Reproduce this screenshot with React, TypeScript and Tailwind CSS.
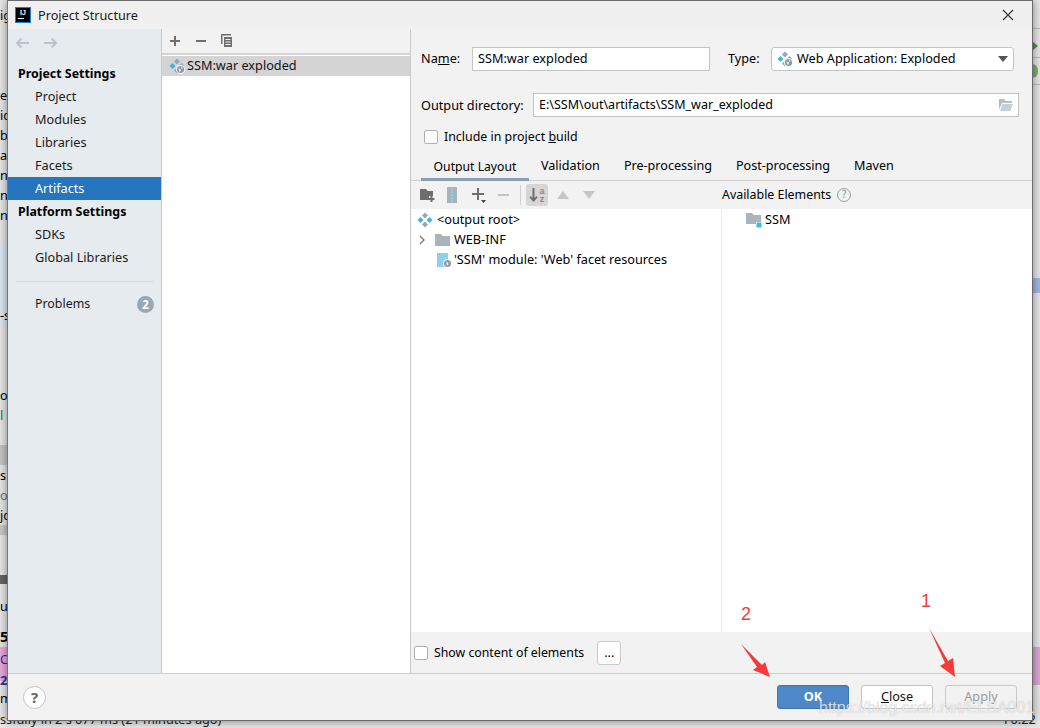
const UI_FONT = "font-['Noto_Sans','Open_Sans',sans-serif]";

const navTop = ['Project', 'Modules', 'Libraries', 'Facets', 'Artifacts'];
const navPlatform = ['SDKs', 'Global Libraries'];
const tabs = ['Validation', 'Pre-processing', 'Post-processing', 'Maven'];

// clipped text of the IDE window behind the dialog
const behindLeft: { y: number; t: string; cls?: string }[] = [
  { y: 6, t: 'ig' }, { y: 86, t: 'e' }, { y: 106, t: 'ic' }, { y: 126, t: 'b' }, { y: 146, t: 'at' },
  { y: 166, t: 'ng' }, { y: 186, t: 'ng' }, { y: 206, t: 'ng' }, { y: 306, t: '-s' }, { y: 386, t: 'oc' },
  { y: 406, t: 'l', cls: 'text-green-700' }, { y: 466, t: 's' }, { y: 486, t: 'og', cls: 'text-gray-500' }, { y: 506, t: 'jc' },
  { y: 597, t: 'ut' }, { y: 627, t: '5', cls: 'font-bold text-[15px]' }, { y: 650, t: 'C', cls: 'text-blue-900' },
  { y: 671, t: '2', cls: 'font-bold text-blue-900' }, { y: 689, t: 'm' },
];

function ArtifactIcon({ globe = true }: { globe?: boolean }) {
  return (
    <svg width="16" height="16" viewBox="0 0 16 16" className="shrink-0">
      <path d="M8 0.5l3 3-3 3-3-3z" fill="#9aa7b0" />
      <path d="M3.5 5l3 3-3 3-3-3z" fill="#40b6e0" />
      <path d="M12.5 5l3 3-3 3-3-3z" fill={globe ? '#9aa7b0' : '#40b6e0'} />
      <path d="M8 9.5l3 3-3 3-3-3z" fill="#9aa7b0" />
      {globe && (
        <g>
          <circle cx="11.5" cy="11.5" r="4.5" fill="#fff" />
          <circle cx="11.5" cy="11.5" r="3.6" fill="#8a9aa6" />
          <path d="M9.5 10.5l2 .5 .5 2-1.500 1zM12 8.500l2 1.500-1.500 1z" fill="#e6ebef" />
        </g>
      )}
    </svg>
  );
}

function FolderIcon() {
  return (
    <svg width="15" height="12" viewBox="0 0 15 12" className="shrink-0">
      <path d="M0 0h6l1.500 2H15v10H0z" fill="#aab4bb" />
    </svg>
  );
}

function ToolIcon({ d, fill = '#6e6e6e' }: { d: string; fill?: string }) {
  return (
    <svg width="16" height="16" viewBox="0 0 16 16" className="shrink-0">
      <path d={d} fill={fill} />
    </svg>
  );
}

function Checkbox() {
  return <span className="block w-[14px] h-[14px] rounded-[2px] border border-[#b0b0b0] bg-white shrink-0" />;
}

function Button({ label, cls }: { label: React.ReactNode; cls: string }) {
  return (
    <div className={`w-[72px] h-[24px] rounded-[3px] border flex items-center justify-center text-[12.7px] ${cls}`}>{label}</div>
  );
}

export default function App() {
  return (
    <div className={`relative w-[1040px] h-[728px] overflow-hidden bg-[#e6e6e6] text-[12.7px] text-black ${UI_FONT}`}>
      {/* IDE window behind the dialog */}
      <div className="absolute left-0 top-[245px] w-2 h-[80px] bg-[#dde7f1]" />
      <div className="absolute left-0 top-[445px] w-2 h-[20px] bg-[#c4c4c4]" />
      <div className="absolute left-0 top-[525px] w-2 h-[10px] bg-[#c8c8c8]" />
      <div className="absolute left-0 top-[575px] w-2 h-[9px] bg-[#666666]" />
      <div className="absolute left-0 top-[647px] w-2 h-[34px] bg-[#e8a8dc]" />
      <div className="absolute left-[1032px] top-[278px] w-2 h-[15px] bg-[#9fb8e8]" />
      <div className="absolute left-[1032px] top-[647px] w-2 h-[38px] bg-[#dba6d4]" />
      <div className="absolute left-[1032px] top-[64px] w-[6px] h-[14px] rounded-r-full bg-[#7fae6e]" />
      <div className="absolute left-[1032px] top-[41px] w-0 h-0 border-y-[5px] border-y-transparent border-l-[6px] border-l-[#4d8f4d]" />
      <div className="absolute left-[1032px] top-[28px] w-2 h-px bg-[#bdbdbd]" />
      <div className="absolute left-[1032px] top-[57px] w-2 h-px bg-[#bdbdbd]" />
      <div className="absolute left-[1032px] top-[84px] w-2 h-px bg-[#bdbdbd]" />
      {behindLeft.map(b => (
        <div key={b.y} className={`absolute left-0 w-[7px] overflow-hidden whitespace-nowrap leading-[18px] ${b.cls ?? ''}`} style={{ top: b.y }}>{b.t}</div>
      ))}
      <div className="absolute left-0 top-[710px] whitespace-nowrap leading-[18px] text-[#222]">ssfully in 2 s 077 ms (21 minutes ago)</div>
      <div className="absolute left-[1004px] top-[710px] whitespace-nowrap leading-[18px] text-[#222]">F0:22</div>

      {/* dialog window */}
      <div className="absolute left-[7px] top-0 w-[1026px] h-[721px] flex flex-col border border-[#6b6b6b] border-l-[#777] bg-[#f2f2f2] shadow-[0_0_9px_rgba(0,0,0,0.45)]">
        {/* title bar */}
        <div className="h-[28px] shrink-0 bg-[#f0f0f0] flex items-center pl-[7px] pr-[18px]">
          <div className="w-4 h-4 bg-black border border-[#1b7fd6] flex flex-col items-center justify-start mr-[7px] shrink-0">
            <span className="text-white text-[7px] leading-[9px] font-bold font-['Liberation_Sans',sans-serif]">IJ</span>
            <span className="block w-[6px] h-px bg-white self-start ml-[2px] mt-[1px]" />
          </div>
          <span className="pt-px text-[#1a1a1a]">Project Structure</span>
          <svg width="12" height="12" viewBox="0 0 12 12" className="ml-auto">
            <path d="M1 1l10 10M11 1L1 11" stroke="#333" strokeWidth="1.200" fill="none" />
          </svg>
        </div>

        <div className="flex-1 min-h-0 flex">
          {/* settings sidebar */}
          <div className="w-[153px] shrink-0 bg-[#e6ebf0] flex flex-col">
            <div className="h-[33px] shrink-0 flex items-start pt-[8px] pl-[7px] gap-[13px]">
              <svg width="15" height="12" viewBox="0 0 15 12"><path d="M14 6H2M6.500 1.500L2 6l4.500 4.500" stroke="#bcc2c7" strokeWidth="2" fill="none" /></svg>
              <svg width="15" height="12" viewBox="0 0 15 12"><path d="M1 6h12M8.500 1.500L13 6l-4.500 4.500" stroke="#bcc2c7" strokeWidth="2" fill="none" /></svg>
            </div>
            <div className="h-[23px] flex items-center pl-[10px] pt-[2px] font-bold text-[12.4px]">Project Settings</div>
            {navTop.map(n => (
              <div key={n} className={`h-[23px] flex items-center pl-[27px] ${n === 'Artifacts' ? 'bg-[#2675bf] text-white' : 'text-[#1a1a1a]'}`}>{n}</div>
            ))}
            <div className="h-[23px] flex items-center pl-[10px] pt-[2px] font-bold text-[12.4px]">Platform Settings</div>
            {navPlatform.map(n => (
              <div key={n} className="h-[23px] flex items-center pl-[27px] text-[#1a1a1a]">{n}</div>
            ))}
            <div className="h-px bg-[#d5d9dd] mt-[12px] mx-[8px]" />
            <div className="h-[23px] mt-[11px] flex items-center pl-[27px] pr-[7px] justify-between text-[#1a1a1a]">
              <span className="text-[12.4px]">Problems</span>
              <span className="w-[17px] h-[17px] rounded-full bg-[#9aa7b0] text-white text-[12px] font-bold flex items-center justify-center">2</span>
            </div>
          </div>

          {/* artifact list */}
          <div className="w-[250px] shrink-0 flex flex-col bg-white border-x border-[#c9c9c9]">
            <div className="h-[24px] shrink-0 bg-[#f2f2f2] flex items-center pl-[5px] gap-[10px]">
              <ToolIcon d="M7 3h2v4h4v2H9v4H7V9H3V7h4z" />
              <ToolIcon d="M3 7h10v2H3z" />
              <ToolIcon d="M2 1h10v1.500H3.500V11H2zM5 4h8v10H5zM6.500 6v1h5V6zm0 2.500v1h5v-1zm0 2.500v1h5v-1z" />
            </div>
            <div className="h-[2px] shrink-0 bg-[#d4d4d4]" />
            <div className="h-px shrink-0 bg-white" />
            <div className="h-[20px] bg-[#d4d4d4] flex items-center pl-[7px] gap-[2px] text-[#111]">
              <ArtifactIcon />
              <span className="pb-px">SSM:war exploded</span>
            </div>
          </div>

          {/* artifact settings */}
          <div className="flex-1 min-w-0 flex flex-col">
            <div className="h-[18px] shrink-0" />
            <div className="h-[24px] shrink-0 flex items-center pl-[10px]">
              <span className="w-[51px]">Na<span className="underline">m</span>e:</span>
              <div className="w-[238px] h-[24px] border border-[#c4c4c4] bg-white flex items-center pl-[5px]">SSM:war exploded</div>
              <span className="ml-[18px] w-[43px]">Type:</span>
              <div className="w-[243px] h-[24px] border border-[#c4c4c4] rounded-[3px] bg-white flex items-center pl-[5px] gap-[4px]">
                <ArtifactIcon />
                <span>Web Application: Exploded</span>
                <span className="ml-auto mr-[5px] w-0 h-0 border-x-[5px] border-x-transparent border-t-[6px] border-t-[#555]" />
              </div>
            </div>
            <div className="h-[22px] shrink-0" />
            <div className="h-[24px] shrink-0 flex items-center pl-[10px]">
              <span className="w-[112px] pt-px whitespace-nowrap">Output directory:</span>
              <div className="w-[486px] h-[24px] border border-[#c4c4c4] bg-white flex items-center pl-[5px]">
                <span className="pt-px text-[12.5px]">E:\SSM\out\artifacts\SSM_war_exploded</span>
                <svg width="14" height="12" viewBox="0 0 14 12" className="ml-auto mr-[5px]">
                  <path d="M0 0h5l1.500 2H13v2H3L0 11z" fill="#b6bec4" />
                  <path d="M3.500 5H14l-2.500 7H1z" fill="#c9d0d5" />
                </svg>
              </div>
            </div>
            <div className="h-[12px] shrink-0" />
            <div className="h-[15px] shrink-0 flex items-center pl-[13px] gap-[6px]">
              <Checkbox />
              <span className="pt-px text-[12.4px]">Include in project <span className="underline">b</span>uild</span>
            </div>

            {/* tabs */}
            <div className="h-[37px] shrink-0 flex items-end pl-[10px] border-b border-[#cfcfcf]">
              <div className="h-[26px] w-[108px] flex items-start justify-center pt-[3px] border-b-[3px] border-[#8b9db0] -mb-px text-[12.2px]">Output Layout</div>
              {tabs.map(t => (
                <div key={t} className="h-[26px] px-3 flex items-start pt-[3px] whitespace-nowrap text-[12.6px]">{t}</div>
              ))}
            </div>

            {/* layout toolbars */}
            <div className="h-[28px] shrink-0 flex items-center">
              <div className="w-[310px] shrink-0 flex items-center pl-[9px]">
                <svg width="15" height="14" viewBox="0 0 15 14" className="mr-[12px] shrink-0">
                  <path d="M0 1h6l1.500 2H13v5H9v4H0z" fill="#6e6e6e" />
                  <path d="M10.500 8h2v2h2v2h-2v2h-2v-2h-2v-2h2z" fill="#6e6e6e" />
                </svg>
                <svg width="10" height="16" viewBox="0 0 10 16" className="mr-[15px] shrink-0">
                  <rect width="10" height="16" fill="#a8b4bb" />
                  <path d="M4 1h2v2H4zM4 4h2v2H4zM4 7h2v2H4zM4 10h2v2H4zM4 13h2v2H4z" fill="#8fd0ec" />
                </svg>
                <svg width="14" height="18" viewBox="0 0 14 18" className="mr-[12px] shrink-0">
                  <path d="M5 2h2v5h5v2H7v5H5V9H0V7h5z" fill="#6e6e6e" />
                  <path d="M9 14h5l-2.500 3z" fill="#444" />
                </svg>
                <svg width="11" height="12" viewBox="0 0 11 12" className="mr-[11px] shrink-0"><path d="M0 5h11v2H0z" fill="#c4c4c4" /></svg>
                <div className="w-px h-[20px] bg-[#d0d0d0] mr-[5px] shrink-0" />
                <div className="w-[22px] h-[22px] rounded-[3px] bg-[#d6d6d6] flex items-center justify-center gap-px mr-[9px] shrink-0">
                  <svg width="9" height="14" viewBox="0 0 9 14"><path d="M3.500 0h2v10l2-2 1 1.500-4 4.500-4-4.500 1-1.500 2 2z" fill="#6e6e6e" /></svg>
                  <span className="flex flex-col items-center text-[9px] leading-[8px] font-bold text-[#8a8a8a] font-['Liberation_Sans',sans-serif]">
                    <span>a</span>
                    <span>z</span>
                  </span>
                </div>
                <svg width="12" height="8" viewBox="0 0 12 8" className="mr-[14px] shrink-0"><path d="M6 0l6 8H0z" fill="#c6c6c6" /></svg>
                <svg width="12" height="8" viewBox="0 0 12 8" className="shrink-0"><path d="M0 0h12L6 8z" fill="#c6c6c6" /></svg>
              </div>
              <div className="flex items-center pl-px gap-[6px]">
                <span className="text-[12.4px]">Available Elements</span>
                <span className="w-[14px] h-[14px] rounded-full border border-[#9a9a9a] text-[#8a8a8a] text-[10px] flex items-center justify-center">?</span>
              </div>
            </div>

            {/* output tree and available elements */}
            <div className="flex-1 min-h-0 flex bg-white">
              <div className="w-[311px] shrink-0 border-r border-[#ececec] pt-px">
                <div className="h-[20px] flex items-center pl-[6px] gap-[4px]">
                  <ArtifactIcon globe={false} />
                  <span>&lt;output root&gt;</span>
                </div>
                <div className="h-[20px] flex items-center pl-[8px]">
                  <svg width="7" height="10" viewBox="0 0 7 10" className="mr-[9px]"><path d="M1 1l4 4-4 4" stroke="#777" strokeWidth="1.300" fill="none" /></svg>
                  <FolderIcon />
                  <span className="ml-[4px]">WEB-INF</span>
                </div>
                <div className="h-[20px] flex items-center pl-[26px] gap-[2px]">
                  <svg width="15" height="16" viewBox="0 0 15 16" className="shrink-0">
                    <path d="M0 1h11v14H0z" fill="#8fd0ec" />
                    <circle cx="10.500" cy="11.500" r="4.500" fill="#fff" />
                    <circle cx="10.500" cy="11.500" r="3.500" fill="#8a9aa6" />
                    <path d="M9 10l2 .5.500 2-1.500 1z" fill="#e6ebef" />
                  </svg>
                  <span>'SSM' module: 'Web' facet resources</span>
                </div>
              </div>
              <div className="flex-1 pt-px">
                <div className="h-[20px] flex items-center pl-[24px] gap-[3px]">
                  <svg width="16" height="15" viewBox="0 0 16 15" className="shrink-0">
                    <path d="M0 0h6l1.500 2H15v9H0z" fill="#aab4bb" />
                    <path d="M10 9h5v5h-5z" fill="#fff" />
                    <path d="M10.500 9.500h5v5h-5z" fill="#40b6e0" />
                  </svg>
                  <span>SSM</span>
                </div>
              </div>
            </div>

            <div className="h-[41px] shrink-0 flex items-center pl-[3px]">
              <Checkbox />
              <span className="ml-[6px] pt-px text-[12.3px]">Show content of elements</span>
              <div className="ml-[13px] w-[24px] h-[24px] rounded-[3px] border border-[#c9c9c9] bg-white flex items-center justify-center">...</div>
            </div>
          </div>
        </div>

        {/* button bar */}
        <div className="h-[47px] shrink-0 border-t border-[#cdcdcd] bg-[#f2f2f2] flex items-center pl-[15px] pr-[15px]">
          <div className="w-[23px] h-[23px] rounded-full border border-[#c4c4c4] bg-white text-[#666] text-[15px] font-bold flex items-center justify-center">?</div>
          <div className="ml-auto flex gap-[12px]">
            <Button label="OK" cls="bg-[#4f88c9] border-[#3d74b3] text-white font-bold" />
            <Button label={<span><span className="underline">C</span>lose</span>} cls="bg-white border-[#c4c4c4] text-[#111]" />
            <Button label="Apply" cls="border-[#c9c9c9] text-[#9a9a9a]" />
          </div>
        </div>
      </div>

      {/* red annotations */}
      <svg width="1040" height="728" viewBox="0 0 1040 728" className="absolute left-0 top-0 pointer-events-none">
        <path d="M929 628L948 661L953 658L955 677L940 666L945 663Z" fill="#f63a3a" />
        <path d="M741 644L762 665L765 662L770 677L753 670L757 667Z" fill="#f63a3a" />
      </svg>
      <span className="absolute left-[921px] top-[589px] text-[#f63a3a] text-[18px] leading-[24px] font-['Liberation_Sans',sans-serif]">1</span>
      <span className="absolute left-[741px] top-[602px] text-[#f63a3a] text-[18px] leading-[24px] font-['Liberation_Sans',sans-serif]">2</span>

      {/* blog watermark */}
      <span className="absolute left-[819px] top-[697px] text-white/70 text-[16px] leading-[22px] whitespace-nowrap font-['Liberation_Sans',sans-serif] [text-shadow:0_0_1px_rgba(120,120,120,0.5)]">https://blog.csdn.net/ELSA001</span>
    </div>
  );
}
